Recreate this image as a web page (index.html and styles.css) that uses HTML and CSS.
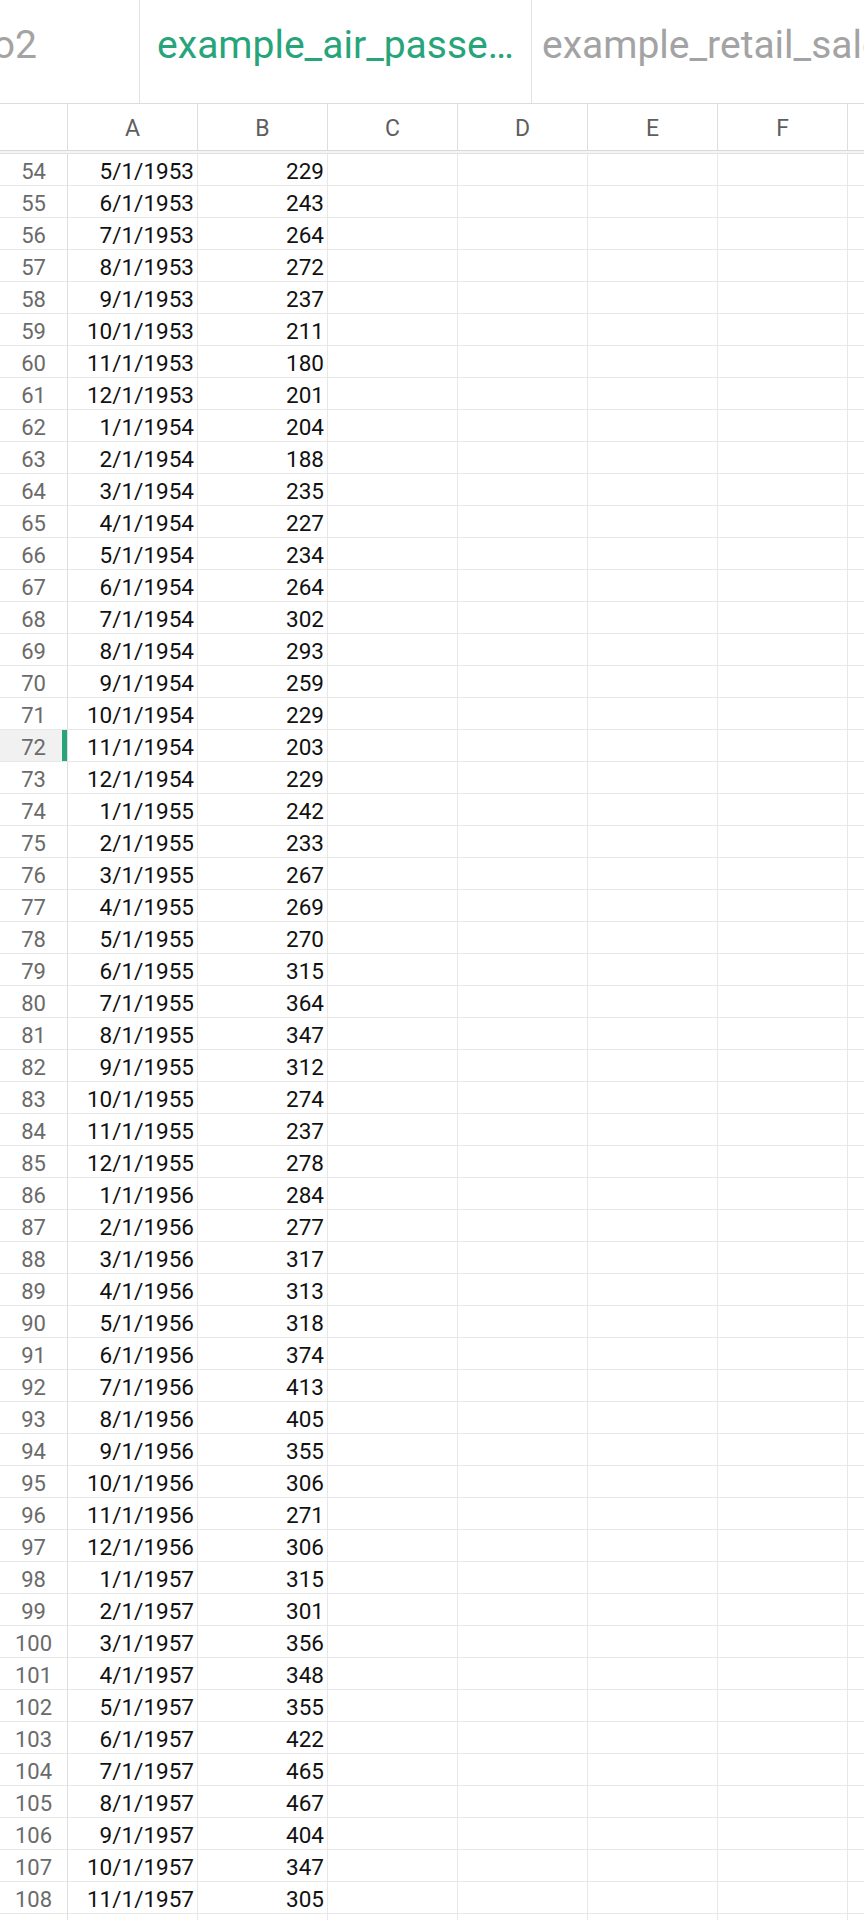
FILE: index.html
```html
<!DOCTYPE html>
<html>
<head>
<meta charset="utf-8">
<link rel="stylesheet" href="styles.css">
</head>
<body>
<div class="tabs">
  <div class="tab tab-prev"><span>example_demo2</span></div>
  <div class="tab tab-active"><span>example_air_passe…</span></div>
  <div class="tab tab-next"><span>example_retail_sales</span></div>
</div>
<div class="colhead">
  <div class="corner"></div><div>A</div><div>B</div><div>C</div><div>D</div><div>E</div><div>F</div><div>G</div>
</div>
<div class="band"></div>
<div class="grid">
<div class="row"><div class="rh">54</div><div class="c">5/1/1953</div><div class="c">229</div><i></i><i></i><i></i><i></i><i></i></div>
<div class="row"><div class="rh">55</div><div class="c">6/1/1953</div><div class="c">243</div><i></i><i></i><i></i><i></i><i></i></div>
<div class="row"><div class="rh">56</div><div class="c">7/1/1953</div><div class="c">264</div><i></i><i></i><i></i><i></i><i></i></div>
<div class="row"><div class="rh">57</div><div class="c">8/1/1953</div><div class="c">272</div><i></i><i></i><i></i><i></i><i></i></div>
<div class="row"><div class="rh">58</div><div class="c">9/1/1953</div><div class="c">237</div><i></i><i></i><i></i><i></i><i></i></div>
<div class="row"><div class="rh">59</div><div class="c">10/1/1953</div><div class="c">211</div><i></i><i></i><i></i><i></i><i></i></div>
<div class="row"><div class="rh">60</div><div class="c">11/1/1953</div><div class="c">180</div><i></i><i></i><i></i><i></i><i></i></div>
<div class="row"><div class="rh">61</div><div class="c">12/1/1953</div><div class="c">201</div><i></i><i></i><i></i><i></i><i></i></div>
<div class="row"><div class="rh">62</div><div class="c">1/1/1954</div><div class="c">204</div><i></i><i></i><i></i><i></i><i></i></div>
<div class="row"><div class="rh">63</div><div class="c">2/1/1954</div><div class="c">188</div><i></i><i></i><i></i><i></i><i></i></div>
<div class="row"><div class="rh">64</div><div class="c">3/1/1954</div><div class="c">235</div><i></i><i></i><i></i><i></i><i></i></div>
<div class="row"><div class="rh">65</div><div class="c">4/1/1954</div><div class="c">227</div><i></i><i></i><i></i><i></i><i></i></div>
<div class="row"><div class="rh">66</div><div class="c">5/1/1954</div><div class="c">234</div><i></i><i></i><i></i><i></i><i></i></div>
<div class="row"><div class="rh">67</div><div class="c">6/1/1954</div><div class="c">264</div><i></i><i></i><i></i><i></i><i></i></div>
<div class="row"><div class="rh">68</div><div class="c">7/1/1954</div><div class="c">302</div><i></i><i></i><i></i><i></i><i></i></div>
<div class="row"><div class="rh">69</div><div class="c">8/1/1954</div><div class="c">293</div><i></i><i></i><i></i><i></i><i></i></div>
<div class="row"><div class="rh">70</div><div class="c">9/1/1954</div><div class="c">259</div><i></i><i></i><i></i><i></i><i></i></div>
<div class="row"><div class="rh">71</div><div class="c">10/1/1954</div><div class="c">229</div><i></i><i></i><i></i><i></i><i></i></div>
<div class="row sel"><div class="rh">72</div><div class="c">11/1/1954</div><div class="c">203</div><i></i><i></i><i></i><i></i><i></i></div>
<div class="row"><div class="rh">73</div><div class="c">12/1/1954</div><div class="c">229</div><i></i><i></i><i></i><i></i><i></i></div>
<div class="row"><div class="rh">74</div><div class="c">1/1/1955</div><div class="c">242</div><i></i><i></i><i></i><i></i><i></i></div>
<div class="row"><div class="rh">75</div><div class="c">2/1/1955</div><div class="c">233</div><i></i><i></i><i></i><i></i><i></i></div>
<div class="row"><div class="rh">76</div><div class="c">3/1/1955</div><div class="c">267</div><i></i><i></i><i></i><i></i><i></i></div>
<div class="row"><div class="rh">77</div><div class="c">4/1/1955</div><div class="c">269</div><i></i><i></i><i></i><i></i><i></i></div>
<div class="row"><div class="rh">78</div><div class="c">5/1/1955</div><div class="c">270</div><i></i><i></i><i></i><i></i><i></i></div>
<div class="row"><div class="rh">79</div><div class="c">6/1/1955</div><div class="c">315</div><i></i><i></i><i></i><i></i><i></i></div>
<div class="row"><div class="rh">80</div><div class="c">7/1/1955</div><div class="c">364</div><i></i><i></i><i></i><i></i><i></i></div>
<div class="row"><div class="rh">81</div><div class="c">8/1/1955</div><div class="c">347</div><i></i><i></i><i></i><i></i><i></i></div>
<div class="row"><div class="rh">82</div><div class="c">9/1/1955</div><div class="c">312</div><i></i><i></i><i></i><i></i><i></i></div>
<div class="row"><div class="rh">83</div><div class="c">10/1/1955</div><div class="c">274</div><i></i><i></i><i></i><i></i><i></i></div>
<div class="row"><div class="rh">84</div><div class="c">11/1/1955</div><div class="c">237</div><i></i><i></i><i></i><i></i><i></i></div>
<div class="row"><div class="rh">85</div><div class="c">12/1/1955</div><div class="c">278</div><i></i><i></i><i></i><i></i><i></i></div>
<div class="row"><div class="rh">86</div><div class="c">1/1/1956</div><div class="c">284</div><i></i><i></i><i></i><i></i><i></i></div>
<div class="row"><div class="rh">87</div><div class="c">2/1/1956</div><div class="c">277</div><i></i><i></i><i></i><i></i><i></i></div>
<div class="row"><div class="rh">88</div><div class="c">3/1/1956</div><div class="c">317</div><i></i><i></i><i></i><i></i><i></i></div>
<div class="row"><div class="rh">89</div><div class="c">4/1/1956</div><div class="c">313</div><i></i><i></i><i></i><i></i><i></i></div>
<div class="row"><div class="rh">90</div><div class="c">5/1/1956</div><div class="c">318</div><i></i><i></i><i></i><i></i><i></i></div>
<div class="row"><div class="rh">91</div><div class="c">6/1/1956</div><div class="c">374</div><i></i><i></i><i></i><i></i><i></i></div>
<div class="row"><div class="rh">92</div><div class="c">7/1/1956</div><div class="c">413</div><i></i><i></i><i></i><i></i><i></i></div>
<div class="row"><div class="rh">93</div><div class="c">8/1/1956</div><div class="c">405</div><i></i><i></i><i></i><i></i><i></i></div>
<div class="row"><div class="rh">94</div><div class="c">9/1/1956</div><div class="c">355</div><i></i><i></i><i></i><i></i><i></i></div>
<div class="row"><div class="rh">95</div><div class="c">10/1/1956</div><div class="c">306</div><i></i><i></i><i></i><i></i><i></i></div>
<div class="row"><div class="rh">96</div><div class="c">11/1/1956</div><div class="c">271</div><i></i><i></i><i></i><i></i><i></i></div>
<div class="row"><div class="rh">97</div><div class="c">12/1/1956</div><div class="c">306</div><i></i><i></i><i></i><i></i><i></i></div>
<div class="row"><div class="rh">98</div><div class="c">1/1/1957</div><div class="c">315</div><i></i><i></i><i></i><i></i><i></i></div>
<div class="row"><div class="rh">99</div><div class="c">2/1/1957</div><div class="c">301</div><i></i><i></i><i></i><i></i><i></i></div>
<div class="row"><div class="rh">100</div><div class="c">3/1/1957</div><div class="c">356</div><i></i><i></i><i></i><i></i><i></i></div>
<div class="row"><div class="rh">101</div><div class="c">4/1/1957</div><div class="c">348</div><i></i><i></i><i></i><i></i><i></i></div>
<div class="row"><div class="rh">102</div><div class="c">5/1/1957</div><div class="c">355</div><i></i><i></i><i></i><i></i><i></i></div>
<div class="row"><div class="rh">103</div><div class="c">6/1/1957</div><div class="c">422</div><i></i><i></i><i></i><i></i><i></i></div>
<div class="row"><div class="rh">104</div><div class="c">7/1/1957</div><div class="c">465</div><i></i><i></i><i></i><i></i><i></i></div>
<div class="row"><div class="rh">105</div><div class="c">8/1/1957</div><div class="c">467</div><i></i><i></i><i></i><i></i><i></i></div>
<div class="row"><div class="rh">106</div><div class="c">9/1/1957</div><div class="c">404</div><i></i><i></i><i></i><i></i><i></i></div>
<div class="row"><div class="rh">107</div><div class="c">10/1/1957</div><div class="c">347</div><i></i><i></i><i></i><i></i><i></i></div>
<div class="row"><div class="rh">108</div><div class="c">11/1/1957</div><div class="c">305</div><i></i><i></i><i></i><i></i><i></i></div>
<div class="row"><div class="rh">109</div><div class="c">12/1/1957</div><div class="c">336</div><i></i><i></i><i></i><i></i><i></i></div>
</div>
</body>
</html>
```

FILE: styles.css
```css
* { box-sizing: border-box; }
html, body { margin: 0; padding: 0; background: #fff; }
body {
  width: 864px;
  height: 1920px;
  overflow: hidden;
  font-family: Roboto, "Noto Sans", sans-serif;
}

.tabs {
  display: flex;
  height: 104px;
  border-bottom: 1px solid #dcdcdc;
  overflow: hidden;
  white-space: nowrap;
}
.tab {
  display: flex;
  align-items: center;
  height: 103px;
  padding-bottom: 14px;
  font-size: 39px;
  color: #a3a3a3;
  overflow: hidden;
  flex-shrink: 0;
}
.tab-prev {
  width: 140px;
  justify-content: flex-end;
  padding-right: 102px;
  border-right: 1px solid #e2e2e2;
}
.tab-active {
  width: 392px;
  justify-content: center;
  color: #27a47a;
  border-right: 1px solid #e2e2e2;
}
.tab-next {
  padding-left: 10px;
}

.colhead {
  display: grid;
  grid-template-columns: 68px repeat(7, 130px);
  height: 47px;
  border-bottom: 1px solid #d9d9d9;
  width: 978px;
}
.colhead > div {
  border-right: 1px solid #dedede;
  display: flex;
  align-items: center;
  justify-content: center;
  font-size: 23px;
  color: #5e5e5e;
  padding-top: 2px;
}

.band {
  height: 3px;
  background: #f4f4f4;
  border-bottom: 1px solid #e2e2e2;
  width: 978px;
}

.grid { width: 978px; }
.row {
  display: grid;
  grid-template-columns: 68px repeat(7, 130px);
  height: 32px;
}
.row > * {
  border-right: 1px solid #e8e8e8;
  border-bottom: 1px solid #e8e8e8;
  height: 32px;
}
.rh {
  display: flex;
  align-items: center;
  justify-content: center;
  padding-top: 3px;
  font-size: 22px;
  color: #6a6a6a;
  border-right-color: #dedede !important;
}
.c {
  display: flex;
  align-items: center;
  justify-content: flex-end;
  padding-right: 3px;
  padding-top: 3px;
  font-size: 22.5px;
  color: #111;
}
.row.sel .rh {
  background: #f1f1f1;
  box-shadow: inset -5px 0 0 #27a47a;
}
```
